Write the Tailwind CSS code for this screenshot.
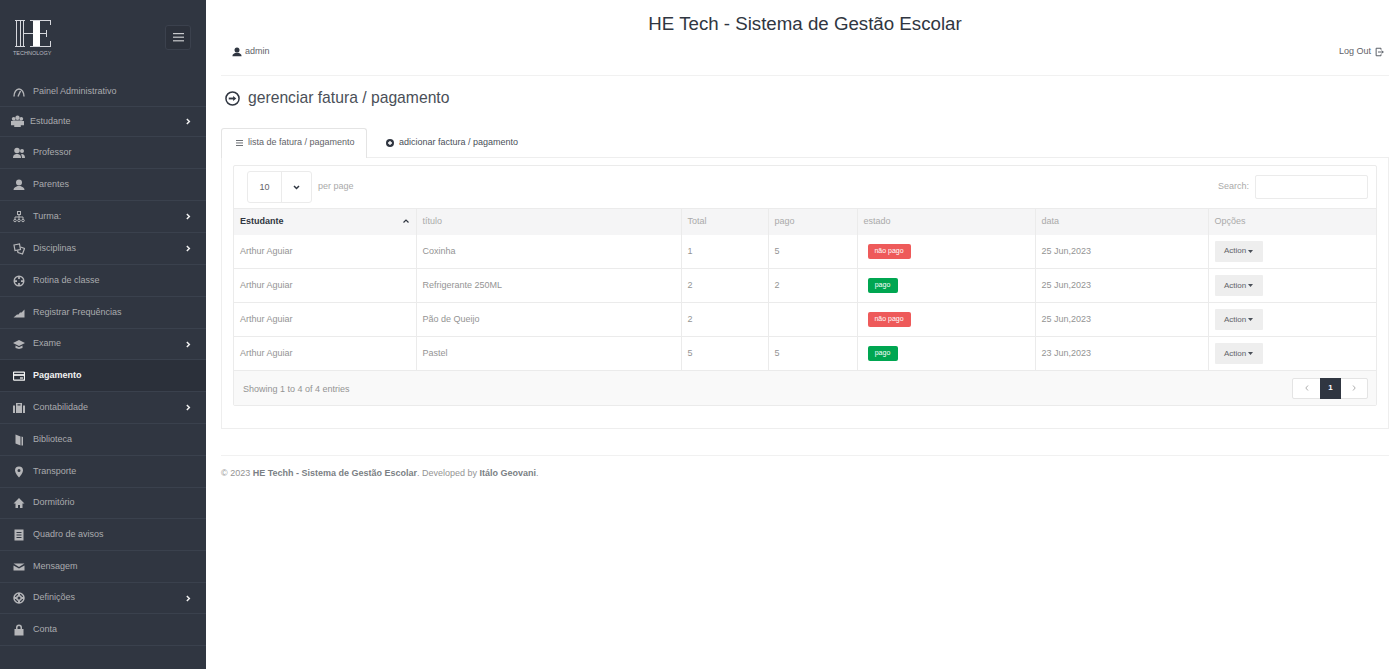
<!DOCTYPE html>
<html lang="en">
<head>
    <meta charset="UTF-8">
    <title>gerenciar fatura / pagamento</title>
    <script src="https://cdn.jsdelivr.net/npm/@tailwindcss/browser@4"></script>
</head>
<body class="bg-white font-['Liberation_Sans',Arial,sans-serif] text-[9px] text-[#949494]">
<div class="flex min-h-[669px]">

    <!-- Sidebar -->
    <aside class="w-[206px] shrink-0 bg-[#303641] text-[#aaabae]">
        <div class="flex h-[76px] justify-between pl-[13px] pr-[15px] pt-[20px]">
            <div class="w-[40px]">
                <svg width="37" height="28" viewBox="0 0 37 28" class="block ml-[2px]" fill="#d5d7dc">
                    <rect x="0" y="0" width="10" height="1"/><rect x="1" y="0" width="1" height="27"/><rect x="5" y="0" width="1" height="27"/><rect x="8" y="0" width="1" height="27"/>
                    <rect x="0" y="26" width="10" height="1"/><rect x="8" y="13" width="11" height="1"/>
                    <rect x="18" y="0" width="7" height="27" fill="#ffffff"/><rect x="15" y="0" width="10" height="1"/><rect x="15" y="26" width="10" height="1"/>
                    <rect x="25" y="0" width="11" height="1"/><rect x="25" y="13" width="7" height="1"/><rect x="25" y="26" width="11" height="1"/>
                    <rect x="35" y="0" width="1" height="5"/><rect x="35" y="21" width="1" height="6"/><rect x="31" y="10" width="1" height="7"/>
                </svg>
                <div class="mt-[2px] text-[5.5px] leading-[6px] text-[#b9bbc0] whitespace-nowrap">TECHNOLOGY</div>
            </div>
            <div class="flex h-[25px] w-[26px] mt-[5px] items-center justify-center rounded-[3px] border border-[#3b414d] bg-[#2c313b]">
                <svg width="11" height="9" viewBox="0 0 11 9" fill="#c9cacd"><rect y="0" width="11" height="1.2"/><rect y="3.6" width="11" height="1.2"/><rect y="7.2" width="11" height="1.2"/></svg>
            </div>
        </div>
        <nav>
            <a class="flex h-[31px] items-center pl-[13px] pt-[1px] border-b border-[#3a414d]">
                <svg class="w-[12px] h-[12px]" viewBox="0 0 24 24" fill="none" stroke="#b5b6b9" stroke-width="2.800"><path d="M2 21A10 15 0 0 1 22 21M10 21l5-11"/></svg>
                <span class="ml-[8px]">Painel Administrativo</span>
            </a>
            <a class="flex h-[30px] items-center pl-[11px] pr-[15px] border-b border-[#3a414d]">
                <svg class="w-[13px] h-[13px]" viewBox="0 0 24 24" fill="#b5b6b9"><circle cx="5" cy="7" r="3.500"/><circle cx="19" cy="7" r="3.500"/><circle cx="12" cy="5" r="4"/><path d="M0 11h6v8H0zM18 11h6v8h-6zM6 10h12v12H6z"/></svg>
                <span class="ml-[6px]">Estudante</span>
                <svg class="ml-auto w-[5px] h-[7px]" viewBox="0 0 6 8" fill="none" stroke="#f0f0f0" stroke-width="1.800"><path d="M1 1l3 3-3 3"/></svg>
            </a>
            <a class="flex h-[32px] items-center pl-[13px] pt-[1px] border-b border-[#3a414d]">
                <svg class="w-[12px] h-[12px]" viewBox="0 0 24 24" fill="#b5b6b9"><circle cx="8" cy="7" r="5.500"/><path d="M0 22c0-6 3-7 6-8h4c3 1 6 2 6 8z"/><circle cx="18" cy="8" r="4"/><path d="M18 14c3 0 6 2 6 8h-6c0-3-1-6-2-7z"/></svg>
                <span class="ml-[8px]">Professor</span>
            </a>
            <a class="flex h-[32px] items-center pl-[13px] pt-[1px] border-b border-[#3a414d]">
                <svg class="w-[12px] h-[12px]" viewBox="0 0 24 24" fill="#b5b6b9"><circle cx="12" cy="7" r="6"/><path d="M1 22c0-5 4-6 8-8h6c4 2 8 3 8 8z"/></svg>
                <span class="ml-[8px]">Parentes</span>
            </a>
            <a class="flex h-[32px] items-center pl-[13px] pr-[15px] border-b border-[#3a414d]">
                <svg class="w-[12px] h-[12px]" viewBox="0 0 24 24" fill="none" stroke="#b5b6b9" stroke-width="2"><rect x="9" y="1" width="6" height="6"/><path d="M12 7v9M4 16v-4h16v4"/><circle cx="4" cy="19" r="2.500"/><circle cx="12" cy="19" r="2.500"/><circle cx="20" cy="19" r="2.500"/></svg>
                <span class="ml-[8px]">Turma:</span>
                <svg class="ml-auto w-[5px] h-[7px]" viewBox="0 0 6 8" fill="none" stroke="#f0f0f0" stroke-width="1.800"><path d="M1 1l3 3-3 3"/></svg>
            </a>
            <a class="flex h-[32px] items-center pl-[13px] pr-[15px] border-b border-[#3a414d]">
                <svg class="w-[12px] h-[12px]" viewBox="0 0 24 24" fill="none" stroke="#b5b6b9" stroke-width="2.400"><path d="M2 4l11-2 2 11-11 2z"/><path d="M15 8l8 3-4 11-9-3-1-4"/></svg>
                <span class="ml-[8px]">Disciplinas</span>
                <svg class="ml-auto w-[5px] h-[7px]" viewBox="0 0 6 8" fill="none" stroke="#f0f0f0" stroke-width="1.800"><path d="M1 1l3 3-3 3"/></svg>
            </a>
            <a class="flex h-[32px] items-center pl-[13px] border-b border-[#3a414d]">
                <svg class="w-[12px] h-[12px]" viewBox="0 0 24 24" fill="none" stroke="#b5b6b9" stroke-width="3"><circle cx="12" cy="12" r="9.500"/><path d="M12 3v5M12 16v5M3 12h5M16 12h5" stroke-width="3.500"/></svg>
                <span class="ml-[8px]">Rotina de classe</span>
            </a>
            <a class="flex h-[32px] items-center pl-[13px] border-b border-[#3a414d]">
                <svg class="w-[12px] h-[12px]" viewBox="0 0 24 24" fill="#b5b6b9"><path d="M1 21L8 15h3l3-4h3l6-6v16z"/></svg>
                <span class="ml-[8px]">Registrar Frequências</span>
            </a>
            <a class="flex h-[31px] items-center pl-[13px] pr-[15px] border-b border-[#3a414d]">
                <svg class="w-[12px] h-[12px]" viewBox="0 0 24 24" fill="#b5b6b9"><path d="M0 10l12-6 12 6-12 6z"/><path d="M5 15l7 3.500 7-3.500v5l-7 2-7-2z"/></svg>
                <span class="ml-[8px]">Exame</span>
                <svg class="ml-auto w-[5px] h-[7px]" viewBox="0 0 6 8" fill="none" stroke="#f0f0f0" stroke-width="1.800"><path d="M1 1l3 3-3 3"/></svg>
            </a>
            <a class="flex h-[32px] items-center pl-[13px] bg-[#2b303a] border-b border-[#3a414d]">
                <svg class="w-[12px] h-[12px]" viewBox="0 0 24 24" fill="none" stroke="#f3f3f3" stroke-width="2.500"><rect x="1" y="4" width="22" height="16" rx="1"/><path d="M1 10h22" stroke-width="3.500"/><path d="M14 16h6"/></svg>
                <span class="ml-[8px] font-bold text-[#f3f3f3]">Pagamento</span>
            </a>
            <a class="flex h-[32px] items-center pl-[13px] pr-[15px] border-b border-[#3a414d]">
                <svg class="w-[12px] h-[12px]" viewBox="0 0 24 24" fill="#b5b6b9"><path fill-rule="evenodd" d="M0 7h4v15H0zM20 7h4v15h-4zM6 7V2h12v20H6zM9 4.500V7h6V4.500z"/></svg>
                <span class="ml-[8px]">Contabilidade</span>
                <svg class="ml-auto w-[5px] h-[7px]" viewBox="0 0 6 8" fill="none" stroke="#f0f0f0" stroke-width="1.800"><path d="M1 1l3 3-3 3"/></svg>
            </a>
            <a class="flex h-[32px] items-center pl-[13px] border-b border-[#3a414d]">
                <svg class="w-[12px] h-[12px]" viewBox="0 0 24 24" fill="#b5b6b9"><path d="M5 1l10 4v18L5 19z"/><path d="M17 5l3 1v17h-3z"/></svg>
                <span class="ml-[8px]">Biblioteca</span>
            </a>
            <a class="flex h-[32px] items-center pl-[13px] border-b border-[#3a414d]">
                <svg class="w-[12px] h-[12px]" viewBox="0 0 24 24" fill="#b5b6b9"><path fill-rule="evenodd" d="M12 1a8 8 0 0 1 8 8c0 5-5 10-8 14-3-4-8-9-8-14a8 8 0 0 1 8-8zm0 5a3 3 0 1 0 0 6 3 3 0 0 0 0-6z"/></svg>
                <span class="ml-[8px]">Transporte</span>
            </a>
            <a class="flex h-[31px] items-center pl-[13px] border-b border-[#3a414d]">
                <svg class="w-[12px] h-[12px]" viewBox="0 0 24 24" fill="#b5b6b9"><path d="M12 2L1 13h4v9h5v-6h4v6h5v-9h4z"/></svg>
                <span class="ml-[8px]">Dormitório</span>
            </a>
            <a class="flex h-[32px] items-center pl-[13px] border-b border-[#3a414d]">
                <svg class="w-[12px] h-[12px]" viewBox="0 0 24 24" fill="#b5b6b9"><path fill-rule="evenodd" d="M3 1h18v22H3zM7 6v2h10V6zm0 5v2h10v-2zm0 5v2h10v-2z"/></svg>
                <span class="ml-[8px]">Quadro de avisos</span>
            </a>
            <a class="flex h-[32px] items-center pl-[13px] border-b border-[#3a414d]">
                <svg class="w-[12px] h-[12px]" viewBox="0 0 24 24" fill="#b5b6b9"><path d="M1 5h22l-11 7z"/><path d="M1 9l11 6 11-6v10H1z"/></svg>
                <span class="ml-[8px]">Mensagem</span>
            </a>
            <a class="flex h-[31px] items-center pl-[13px] pr-[15px] border-b border-[#3a414d]">
                <svg class="w-[12px] h-[12px]" viewBox="0 0 24 24" fill="none" stroke="#b5b6b9" stroke-width="3"><circle cx="12" cy="12" r="10"/><circle cx="12" cy="12" r="4.500"/><path d="M2 12h5M17 12h5M12 2v5M12 17v5" stroke-width="4"/></svg>
                <span class="ml-[8px]">Definições</span>
                <svg class="ml-auto w-[5px] h-[7px]" viewBox="0 0 6 8" fill="none" stroke="#f0f0f0" stroke-width="1.800"><path d="M1 1l3 3-3 3"/></svg>
            </a>
            <a class="flex h-[32px] items-center pl-[13px] pt-[1px] border-b border-[#3a414d]">
                <svg class="w-[12px] h-[12px]" viewBox="0 0 24 24" fill="#b5b6b9"><path fill-rule="evenodd" d="M3 10h3V7a6 6 0 0 1 12 0v3h3v13H3zM9 10h6V7a3 3 0 0 0-6 0z"/></svg>
                <span class="ml-[8px]">Conta</span>
            </a>
        </nav>
    </aside>

    <!-- Main -->
    <main class="flex-1 pl-[15px] pr-[11px]">
        <header class="h-[76px] border-b border-[#f1f1f1]">
            <h1 class="pt-[12px] h-[44px] text-center text-[18.7px] leading-[24px] text-[#303641]">HE Tech - Sistema de Gestão Escolar</h1>
            <div class="flex items-center justify-between pl-[11px] pr-[5px] pt-[1px]">
                <div class="flex items-center text-[#5f6368]">
                    <svg class="w-[10px] h-[10px]" viewBox="0 0 24 24" fill="#303641"><circle cx="12" cy="7" r="6"/><path d="M1 22c0-5 4-6 8-8h6c4 2 8 3 8 8z"/></svg>
                    <span class="ml-[3px]">admin</span>
                </div>
                <div class="flex items-center text-[#5f6368]">
                    <span>Log Out</span>
                    <svg class="ml-[4px] w-[9px] h-[10px]" viewBox="0 0 24 24" fill="none" stroke="#4a4f58" stroke-width="2.400"><path d="M16 6V2H3v20h13v-4M8 12h14M18 8l4 4-4 4"/></svg>
                </div>
            </div>
        </header>

        <div class="flex h-[44px] mb-[8px] items-center pl-[4px] text-[#303641]">
            <svg class="w-[15px] h-[15px]" viewBox="0 0 24 24" fill="none" stroke="currentColor" stroke-width="2.400"><circle cx="12" cy="12" r="10.500"/><path d="M6 12h8" stroke-width="3"/><path d="M13 8l5 4-5 4z" fill="currentColor" stroke="none"/></svg>
            <span class="ml-[8px] text-[15.700px] text-[#4a4f58]">gerenciar fatura / pagamento</span>
        </div>

        <!-- Tabs -->
        <div class="flex h-[30px] text-[#5f6368]">
            <div class="relative z-10 flex h-[30px] w-[146px] items-center pl-[14px] pb-[1px] rounded-t-[3px] border border-b-0 border-[#e4e4e4] bg-white">
                <svg width="7" height="6" viewBox="0 0 7 6" fill="#5f6368"><rect width="7" height="0.9"/><rect y="2.500" width="7" height="0.9"/><rect y="5" width="7" height="0.9"/></svg>
                <span class="ml-[5px]">lista de fatura / pagamento</span>
            </div>
            <div class="flex items-center pl-[19px]">
                <svg class="w-[8px] h-[8px]" viewBox="0 0 24 24"><circle cx="12" cy="12" r="12" fill="#303641"/><path d="M12 6v12M6 12h12" stroke="#fff" stroke-width="4"/></svg>
                <span class="ml-[5px] text-[#4a4f58]">adicionar factura / pagamento</span>
            </div>
        </div>

        <!-- Panel -->
        <section class="-mt-[1px] h-[272px] border border-[#eeeeee] pt-[7px] px-[11px]">
            <div class="border border-[#ebebeb] rounded-[2px]">
                <div class="flex h-[42px] items-center justify-between pl-[13px] pr-[8px]">
                    <div class="flex items-center">
                        <div class="flex h-[32px] w-[65px] items-center rounded-[3px] border border-[#ebebeb] text-[#5f6368]">
                            <span class="w-[34px] text-center border-r border-[#ebebeb] leading-[30px]">10</span>
                            <svg class="ml-[11px] w-[7px] h-[5px]" viewBox="0 0 7 5" fill="none" stroke="#303641" stroke-width="1.500"><path d="M1 1l2.500 2.500L6 1"/></svg>
                        </div>
                        <span class="ml-[6px] text-[#aaaaaa]">per page</span>
                    </div>
                    <div class="flex items-center">
                        <span class="text-[#aaaaaa]">Search:</span>
                        <div class="ml-[6px] h-[24px] w-[113px] rounded-[2px] border border-[#ebebeb]"></div>
                    </div>
                </div>
                <table class="w-full table-fixed border-collapse">
                    <colgroup>
                        <col class="w-[182px]"><col class="w-[265px]"><col class="w-[87px]"><col class="w-[89px]"><col class="w-[178px]"><col class="w-[173px]"><col>
                    </colgroup>
                    <thead class="bg-[#f5f5f6] text-[#aaaaaa]">
                        <tr class="h-[26px] text-left border-t border-[#ebebeb]">
                            <th class="px-[6px] pb-[1px] font-normal border-r border-[#ebebeb]">
                                <div class="flex items-center justify-between pr-[1px]">
                                    <span class="font-bold text-[#303641]">Estudante</span>
                                    <svg class="w-[6px] h-[4px]" viewBox="0 0 6 4" fill="none" stroke="#303641" stroke-width="1.200"><path d="M0.500 3.500L3 1l2.500 2.500"/></svg>
                                </div>
                            </th>
                            <th class="px-[6px] pb-[1px] font-normal border-r border-[#ebebeb]">título</th>
                            <th class="px-[6px] pb-[1px] font-normal border-r border-[#ebebeb]">Total</th>
                            <th class="px-[6px] pb-[1px] font-normal border-r border-[#ebebeb]">pago</th>
                            <th class="px-[6px] pb-[1px] font-normal border-r border-[#ebebeb]">estado</th>
                            <th class="px-[6px] pb-[1px] font-normal border-r border-[#ebebeb]">data</th>
                            <th class="px-[6px] pb-[1px] font-normal">Opções</th>
                        </tr>
                    </thead>
                    <tbody>
                        <tr class="h-[34px] border-b border-[#ebebeb]">
                            <td class="px-[6px] border-r border-[#ebebeb]">Arthur Aguiar</td>
                            <td class="px-[6px] border-r border-[#ebebeb]">Coxinha</td>
                            <td class="px-[6px] border-r border-[#ebebeb]">1</td>
                            <td class="px-[6px] border-r border-[#ebebeb]">5</td>
                            <td class="pl-[10px] border-r border-[#ebebeb]"><span class="inline-flex h-[15px] w-[43px] items-center justify-center rounded-[2px] bg-[#ee5a5a] text-[7px] text-white">não pago</span></td>
                            <td class="px-[6px] border-r border-[#ebebeb]">25 Jun,2023</td>
                            <td class="px-[6px]"><span class="inline-flex h-[21px] w-[48px] items-center justify-center gap-[2px] rounded-[1px] bg-[#eeeeee] text-[8px] text-[#5f6368]">Action <svg width="5" height="3" viewBox="0 0 5 3" fill="#4a4f58"><path d="M0 0h5L2.500 3z"/></svg></span></td>
                        </tr>
                        <tr class="h-[34px] border-b border-[#ebebeb]">
                            <td class="px-[6px] border-r border-[#ebebeb]">Arthur Aguiar</td>
                            <td class="px-[6px] border-r border-[#ebebeb]">Refrigerante 250ML</td>
                            <td class="px-[6px] border-r border-[#ebebeb]">2</td>
                            <td class="px-[6px] border-r border-[#ebebeb]">2</td>
                            <td class="pl-[10px] border-r border-[#ebebeb]"><span class="inline-flex h-[15px] w-[30px] items-center justify-center rounded-[2px] bg-[#00a651] text-[7px] text-white">pago</span></td>
                            <td class="px-[6px] border-r border-[#ebebeb]">25 Jun,2023</td>
                            <td class="px-[6px]"><span class="inline-flex h-[21px] w-[48px] items-center justify-center gap-[2px] rounded-[1px] bg-[#eeeeee] text-[8px] text-[#5f6368]">Action <svg width="5" height="3" viewBox="0 0 5 3" fill="#4a4f58"><path d="M0 0h5L2.500 3z"/></svg></span></td>
                        </tr>
                        <tr class="h-[34px] border-b border-[#ebebeb]">
                            <td class="px-[6px] border-r border-[#ebebeb]">Arthur Aguiar</td>
                            <td class="px-[6px] border-r border-[#ebebeb]">Pão de Queijo</td>
                            <td class="px-[6px] border-r border-[#ebebeb]">2</td>
                            <td class="px-[6px] border-r border-[#ebebeb]"></td>
                            <td class="pl-[10px] border-r border-[#ebebeb]"><span class="inline-flex h-[15px] w-[43px] items-center justify-center rounded-[2px] bg-[#ee5a5a] text-[7px] text-white">não pago</span></td>
                            <td class="px-[6px] border-r border-[#ebebeb]">25 Jun,2023</td>
                            <td class="px-[6px]"><span class="inline-flex h-[21px] w-[48px] items-center justify-center gap-[2px] rounded-[1px] bg-[#eeeeee] text-[8px] text-[#5f6368]">Action <svg width="5" height="3" viewBox="0 0 5 3" fill="#4a4f58"><path d="M0 0h5L2.500 3z"/></svg></span></td>
                        </tr>
                        <tr class="h-[34px] border-b border-[#ebebeb]">
                            <td class="px-[6px] border-r border-[#ebebeb]">Arthur Aguiar</td>
                            <td class="px-[6px] border-r border-[#ebebeb]">Pastel</td>
                            <td class="px-[6px] border-r border-[#ebebeb]">5</td>
                            <td class="px-[6px] border-r border-[#ebebeb]">5</td>
                            <td class="pl-[10px] border-r border-[#ebebeb]"><span class="inline-flex h-[15px] w-[30px] items-center justify-center rounded-[2px] bg-[#00a651] text-[7px] text-white">pago</span></td>
                            <td class="px-[6px] border-r border-[#ebebeb]">23 Jun,2023</td>
                            <td class="px-[6px]"><span class="inline-flex h-[21px] w-[48px] items-center justify-center gap-[2px] rounded-[1px] bg-[#eeeeee] text-[8px] text-[#5f6368]">Action <svg width="5" height="3" viewBox="0 0 5 3" fill="#4a4f58"><path d="M0 0h5L2.500 3z"/></svg></span></td>
                        </tr>
                    </tbody>
                </table>
                <div class="flex h-[34px] items-center justify-between bg-[#f9f9f9] pl-[9px] pr-[8px]">
                    <span class="pt-[4px]">Showing 1 to 4 of 4 entries</span>
                    <div class="flex h-[21px] w-[76px] rounded-[2px] border border-[#e4e4e4] bg-white text-[8px] text-[#aaaaaa]">
                        <span class="flex w-[27px] items-center justify-center">
                            <svg width="4" height="6" viewBox="0 0 4 6" fill="none" stroke="#999" stroke-width="0.800"><path d="M3 0.500L0.800 3 3 5.500"/></svg>
                        </span>
                        <span class="-my-[1px] flex w-[21px] items-center justify-center bg-[#303641] font-bold text-white">1</span>
                        <span class="flex w-[26px] items-center justify-center">
                            <svg width="4" height="6" viewBox="0 0 4 6" fill="none" stroke="#999" stroke-width="0.800"><path d="M1 0.500L3.200 3 1 5.500"/></svg>
                        </span>
                    </div>
                </div>
            </div>
        </section>

        <footer class="mt-[26px] border-t border-[#f1f1f1] pt-[12px] leading-[11px] text-[#949494]">
            © 2023 <b class="text-[#7b7f85]">HE Techh - Sistema de Gestão Escolar</b>. Developed by <b class="text-[#7b7f85]">Itálo Geovani</b>.
        </footer>
    </main>
</div>
</body>
</html>
